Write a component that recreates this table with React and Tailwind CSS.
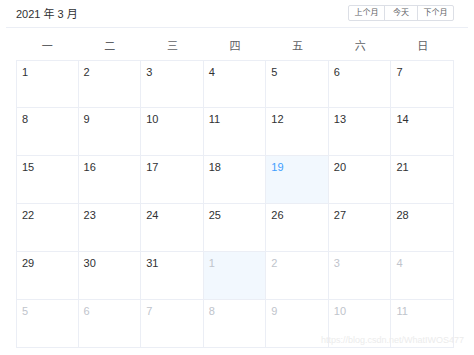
import React from "react";

const weeks = ["一", "二", "三", "四", "五", "六", "日"];

const rows = [
  [[1, 0], [2, 0], [3, 0], [4, 0], [5, 0], [6, 0], [7, 0]],
  [[8, 0], [9, 0], [10, 0], [11, 0], [12, 0], [13, 0], [14, 0]],
  [[15, 0], [16, 0], [17, 0], [18, 0], [19, 2], [20, 0], [21, 0]],
  [[22, 0], [23, 0], [24, 0], [25, 0], [26, 0], [27, 0], [28, 0]],
  [[29, 0], [30, 0], [31, 0], [1, 3], [2, 1], [3, 1], [4, 1]],
  [[5, 1], [6, 1], [7, 1], [8, 1], [9, 1], [10, 1], [11, 1]],
];

function Cell({ d, t, first, col }) {
  const bg = t === 2 || t === 3 ? "bg-[#f2f8fe]" : "bg-white";
  const color =
    t === 2 ? "text-[#409eff]" : t === 1 || t === 3 ? "text-[#c0c4cc]" : "text-[#303133]";
  return (
    <div
      className={`h-[48px] border-r border-b border-[#ebeef5] ${col === 0 ? "border-l" : ""} ${
        first ? "border-t" : ""
      } ${bg} pt-[4px] pl-[5px] text-[11px] leading-[14px] ${color}`}
    >
      {d}
    </div>
  );
}

export default function App() {
  return (
    <div
      className="relative w-[474px] h-[355px] overflow-hidden bg-white"
      style={{ fontFamily: '"Liberation Sans", "Noto Sans CJK SC", sans-serif' }}
    >
      <div className="mx-[6px] h-[28px] border-b border-[#ebeef5] pl-[10px] pr-[14px] flex items-start justify-between">
        <div className="pt-[7px] text-[11px] leading-[14px] text-[#303133]">2021 年 3 月</div>
        <div className="mt-[5px] flex h-[16px] border border-[#dcdfe6] rounded-[2px] text-[8px] leading-[14px] text-[#606266]">
          <div className="w-[36px] flex items-center justify-center border-r border-[#dcdfe6]">上个月</div>
          <div className="w-[33px] flex items-center justify-center border-r border-[#dcdfe6]">今天</div>
          <div className="w-[35px] flex items-center justify-center">下个月</div>
        </div>
      </div>
      <div className="ml-[16px] w-[438px]">
        <div className="grid grid-cols-7 h-[32px]">
          {weeks.map((w) => (
            <div key={w} className="flex items-center justify-center pt-[5px] text-[11px] text-[#606266]">
              {w}
            </div>
          ))}
        </div>
        <div className="grid grid-cols-7">
          {rows.map((r, ri) =>
            r.map(([d, t], ci) => (
              <Cell key={`${ri}-${ci}`} d={d} t={t} first={ri === 0} col={ci} />
            ))
          )}
        </div>
      </div>
      <div className="absolute left-[321px] top-[334px] text-[9px] leading-[12px] text-[#ececec] whitespace-nowrap">
        https://blog.csdn.net/WhatIWOS477
      </div>
    </div>
  );
}
